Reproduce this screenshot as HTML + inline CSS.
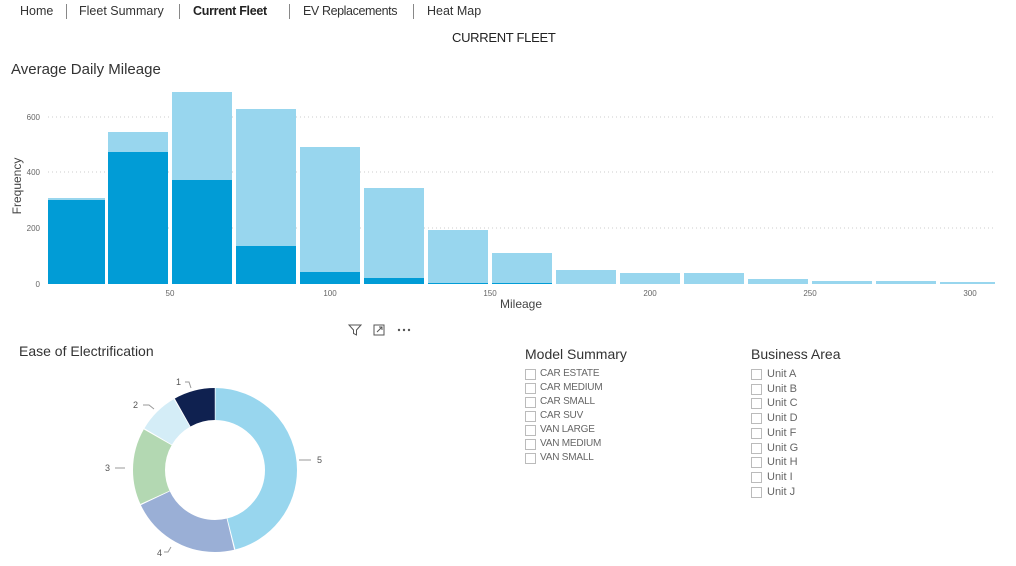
<!DOCTYPE html>
<html><head><meta charset="utf-8"><style>
body{margin:0;width:1016px;height:566px;background:#fff;font-family:"Liberation Sans",sans-serif;position:relative;overflow:hidden}
.a{position:absolute;white-space:nowrap}
.nav{font-size:12.5px;color:#333;top:4px}
.sep{position:absolute;top:4px;width:1px;height:15px;background:#888}
.cb{position:absolute;width:9px;height:9px;border:1px solid #bbb;background:#fff}
.ms{font-size:10px;color:#666;letter-spacing:-0.2px}
.ba{font-size:11px;color:#666}
</style></head><body>
<div class="a nav" style="left:20px">Home</div>
<div class="sep" style="left:66px"></div>
<div class="a nav" style="left:79px">Fleet Summary</div>
<div class="sep" style="left:179px"></div>
<div class="a nav" style="left:193px;font-weight:bold;color:#222;letter-spacing:-0.3px">Current Fleet</div>
<div class="sep" style="left:289px"></div>
<div class="a nav" style="left:303px;letter-spacing:-0.4px">EV Replacements</div>
<div class="sep" style="left:413px"></div>
<div class="a nav" style="left:427px">Heat Map</div>
<div class="a" style="left:452px;top:30px;font-size:13px;color:#222;letter-spacing:-0.3px">CURRENT FLEET</div>
<div class="a" style="left:11px;top:61px;font-size:15px;color:#333">Average Daily Mileage</div>

<svg class="a" style="left:0;top:0" width="1016" height="340">
<g stroke="#ccc" stroke-dasharray="1,3">
<line x1="48" x2="995" y1="117" y2="117"/><line x1="48" x2="995" y1="172" y2="172"/><line x1="48" x2="995" y1="228" y2="228"/>
</g>
<g font-size="8" fill="#666" text-anchor="end">
<text x="40" y="120">600</text><text x="40" y="175">400</text><text x="40" y="231">200</text><text x="40" y="287">0</text>
</g>
<g font-size="8" fill="#666" text-anchor="middle">
<text x="170" y="296">50</text><text x="330" y="296">100</text><text x="490" y="296">150</text><text x="650" y="296">200</text><text x="810" y="296">250</text><text x="970" y="296">300</text>
</g>
<text x="521" y="308" font-size="12" fill="#444" text-anchor="middle">Mileage</text>
<text transform="translate(21,186) rotate(-90)" font-size="12" fill="#444" text-anchor="middle">Frequency</text>
<g fill="#98d6ee">
<rect x="48" y="198" width="57" height="86"/>
<rect x="108" y="132" width="60" height="152"/>
<rect x="172" y="92" width="60" height="192"/>
<rect x="236" y="109" width="60" height="175"/>
<rect x="300" y="147" width="60" height="137"/>
<rect x="364" y="188" width="60" height="96"/>
<rect x="428" y="230" width="60" height="54"/>
<rect x="492" y="253" width="60" height="31"/>
<rect x="556" y="270" width="60" height="14"/>
<rect x="620" y="273" width="60" height="11"/>
<rect x="684" y="273" width="60" height="11"/>
<rect x="748" y="279" width="60" height="5"/>
<rect x="812" y="281" width="60" height="3"/>
<rect x="876" y="281" width="60" height="3"/>
<rect x="940" y="282" width="55" height="2"/>
</g>
<g fill="#019cd6">
<rect x="48" y="200" width="57" height="84"/>
<rect x="108" y="152" width="60" height="132"/>
<rect x="172" y="180" width="60" height="104"/>
<rect x="236" y="246" width="60" height="38"/>
<rect x="300" y="272" width="60" height="12"/>
<rect x="364" y="278" width="60" height="6"/>
<rect x="428" y="283" width="60" height="1"/>
<rect x="492" y="283" width="60" height="1"/>
</g>
<g stroke="#555" fill="none" stroke-width="1">
<path d="M349 325h12l-4.5 5v5l-3-1.5v-3.5z"/>
<rect x="374" y="325" width="10" height="10"/><path d="M377 332l5-5M379 327h3v3"/>
</g>
<g fill="#555"><circle cx="399" cy="330" r="1.2"/><circle cx="404" cy="330" r="1.2"/><circle cx="409" cy="330" r="1.2"/></g>
</svg>

<div class="a" style="left:19px;top:343px;font-size:14px;color:#333">Ease of Electrification</div>
<svg class="a" style="left:0;top:360px" width="400" height="206">
<g transform="translate(215,110) rotate(-90)" fill="none" stroke-width="32">
<circle r="66" stroke="#98d6ee" stroke-dasharray="191.2 500"/>
<circle r="66" stroke="#9aafd6" stroke-dasharray="0 191.2 91 500"/>
<circle r="66" stroke="#b3d8b2" stroke-dasharray="0 282.2 63.4 500"/>
<circle r="66" stroke="#d4edf7" stroke-dasharray="0 345.6 34.6 500"/>
<circle r="66" stroke="#0f2150" stroke-dasharray="0 380.2 34.6 500"/>
<circle r="66" stroke="#fff" stroke-dasharray="1 190.2 1 90 1 62.4 1 33.6 1 33.6 1 500" stroke-dashoffset="0.5"/>
</g>
<g stroke="#999" fill="none"><path d="M185 22h4l2 6"/><path d="M143 45h6l5 4"/><path d="M115 108h10"/><path d="M164 192h4l3-5"/><path d="M299 100h12"/></g>
<g font-size="9" fill="#555"><text x="176" y="25">1</text><text x="133" y="48">2</text><text x="105" y="111">3</text><text x="157" y="196">4</text><text x="317" y="103">5</text></g>
</svg>

<div class="a" style="left:525px;top:346px;font-size:14px;color:#333">Model Summary</div>
<div class="a" style="left:751px;top:346px;font-size:14px;color:#333">Business Area</div>
<div class="cb" style="left:525px;top:369px"></div><div class="a ms" style="left:540px;top:368px">CAR ESTATE</div>
<div class="cb" style="left:525px;top:383px"></div><div class="a ms" style="left:540px;top:382px">CAR MEDIUM</div>
<div class="cb" style="left:525px;top:397px"></div><div class="a ms" style="left:540px;top:396px">CAR SMALL</div>
<div class="cb" style="left:525px;top:411px"></div><div class="a ms" style="left:540px;top:410px">CAR SUV</div>
<div class="cb" style="left:525px;top:425px"></div><div class="a ms" style="left:540px;top:424px">VAN LARGE</div>
<div class="cb" style="left:525px;top:439px"></div><div class="a ms" style="left:540px;top:438px">VAN MEDIUM</div>
<div class="cb" style="left:525px;top:453px"></div><div class="a ms" style="left:540px;top:452px">VAN SMALL</div>

<div class="cb" style="left:751px;top:369px"></div><div class="a ba" style="left:767px;top:368px">Unit A</div>
<div class="cb" style="left:751px;top:384px"></div><div class="a ba" style="left:767px;top:383px">Unit B</div>
<div class="cb" style="left:751px;top:398px"></div><div class="a ba" style="left:767px;top:397px">Unit C</div>
<div class="cb" style="left:751px;top:413px"></div><div class="a ba" style="left:767px;top:412px">Unit D</div>
<div class="cb" style="left:751px;top:428px"></div><div class="a ba" style="left:767px;top:427px">Unit F</div>
<div class="cb" style="left:751px;top:443px"></div><div class="a ba" style="left:767px;top:442px">Unit G</div>
<div class="cb" style="left:751px;top:457px"></div><div class="a ba" style="left:767px;top:456px">Unit H</div>
<div class="cb" style="left:751px;top:472px"></div><div class="a ba" style="left:767px;top:471px">Unit I</div>
<div class="cb" style="left:751px;top:487px"></div><div class="a ba" style="left:767px;top:486px">Unit J</div>
</body></html>
